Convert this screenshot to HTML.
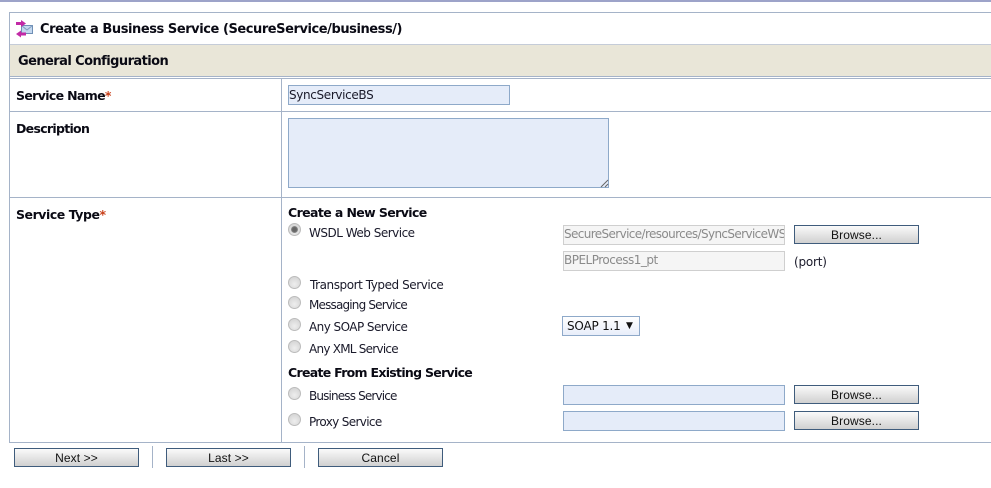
<!DOCTYPE html>
<html><head><meta charset="utf-8"><style>
html,body{margin:0;padding:0;background:#fff}
body{position:relative;width:991px;height:488px;overflow:hidden;font-family:"DejaVu Sans","Liberation Sans",sans-serif;font-size:12px;color:#1a1a2a}
.a,.t,.b,.r,.i{position:absolute;box-sizing:border-box}
.t{white-space:nowrap;line-height:16px;letter-spacing:-.45px}
.h{font-weight:bold;color:#0a0a14;letter-spacing:-.65px;font-size:12.5px}
.l{background:#a5b3c8}
.b{width:125px;height:19px;border:1px solid #3f5c7c;background:linear-gradient(#fafafa,#d0d0d0);text-align:center;line-height:18px;color:#111;font-family:"Liberation Sans",sans-serif;font-size:12px;letter-spacing:.1px}
.r{width:13px;height:13px;border-radius:50%;border:1px solid #bcbcbc;background:radial-gradient(circle at 50% 65%,#eee,#cfcfcf)}
.i{background:#e5ecf9;border:1px solid #8ea9c9}
.d{background:#f5f5f5;border:1px solid #cfcfcf;color:#8a8a8a;font-size:12px;line-height:17px;padding-left:0;letter-spacing:-.5px;overflow:hidden;white-space:nowrap}
</style></head><body>
<div class="a" style="left:0;top:0;width:991px;height:2px;background:#9da3c9"></div>
<div class="a l" style="left:9px;top:12px;width:982px;height:1px"></div>
<div class="a l" style="left:9px;top:44px;width:982px;height:1px;background:#c5ccd8"></div>
<div class="a" style="left:10px;top:45px;width:981px;height:31px;background:#e9e6d8"></div>
<div class="a l" style="left:9px;top:76px;width:982px;height:1px"></div>
<div class="a l" style="left:9px;top:78px;width:982px;height:1px"></div>
<div class="a l" style="left:9px;top:111px;width:982px;height:1px"></div>
<div class="a l" style="left:9px;top:197px;width:982px;height:1px"></div>
<div class="a l" style="left:9px;top:442px;width:982px;height:1px"></div>
<div class="a l" style="left:9px;top:12px;width:1px;height:431px"></div>
<div class="a l" style="left:281px;top:78px;width:1px;height:365px"></div>

<svg class="a" style="left:16px;top:20px" width="18" height="18" viewBox="0 0 18 18">
<rect x="5.500" y="5.500" width="11" height="8" fill="#c4d8ef" stroke="#6f8fb5"/>
<path d="M5.500 5.500l5.500 4.500 5.500-4.500" fill="none" stroke="#7f9dc0"/>
<path d="M0 2h5V0l5 3.500-5 3.500V5H0z" fill="#c22aa6"/>
<path d="M10 12.500H5V10.500L0 14l5 3.500v-2h5z" fill="#c22aa6"/>
</svg>
<div class="t h" style="left:40px;top:22px;font-size:13px;letter-spacing:-.44px">Create a Business Service (SecureService/business/)</div>
<div class="t h" style="left:18px;top:54px;font-size:13px;letter-spacing:-.57px">General Configuration</div>
<div class="t h" style="left:16px;top:88px">Service Name<span style="color:#c8401a">*</span></div>
<div class="t h" style="left:16px;top:121px;letter-spacing:-.7px">Description</div>
<div class="t h" style="left:16px;top:207px;letter-spacing:-.45px">Service Type<span style="color:#c8401a">*</span></div>

<div class="a i" style="left:288px;top:85px;width:222px;height:20px;font-size:12px;line-height:18px;padding-left:0;letter-spacing:-.35px">SyncServiceBS</div>
<div class="a i" style="left:288px;top:118px;width:321px;height:70px"></div>
<svg class="a" style="left:600px;top:179px" width="9" height="9"><path d="M1 8L8 1M5 8L8 5" stroke="#666" fill="none"/></svg>

<div class="t h" style="left:288px;top:205px;letter-spacing:-.6px">Create a New Service</div>
<div class="r" style="left:288px;top:223px"></div>
<div class="a" style="left:291px;top:226px;width:7px;height:7px;border-radius:50%;background:radial-gradient(circle,#666 40%,#b0b0b0 90%)"></div>
<div class="t" style="left:309px;top:225px;letter-spacing:-.5px">WSDL Web Service</div>
<div class="r" style="left:288px;top:276px"></div>
<div class="t" style="left:310px;top:277px;letter-spacing:-.44px">Transport Typed Service</div>
<div class="r" style="left:288px;top:296px"></div>
<div class="t" style="left:309px;top:297px;letter-spacing:-.82px">Messaging Service</div>
<div class="r" style="left:288px;top:318px"></div>
<div class="t" style="left:309px;top:319px;letter-spacing:-.55px">Any SOAP Service</div>
<div class="r" style="left:288px;top:340px"></div>
<div class="t" style="left:309px;top:341px;letter-spacing:-.75px">Any XML Service</div>
<div class="t h" style="left:288px;top:365px;letter-spacing:-.7px">Create From Existing Service</div>
<div class="r" style="left:288px;top:387px"></div>
<div class="t" style="left:309px;top:388px;letter-spacing:-.85px">Business Service</div>
<div class="r" style="left:288px;top:413px"></div>
<div class="t" style="left:309px;top:414px;letter-spacing:-.65px">Proxy Service</div>

<div class="a d" style="left:563px;top:225px;width:222px;height:20px;letter-spacing:-.62px">SecureService/resources/SyncServiceWSDL</div>
<div class="a d" style="left:563px;top:251px;width:222px;height:20px">BPELProcess1_pt</div>
<div class="t" style="left:794px;top:254px;letter-spacing:-.2px">(port)</div>
<div class="b" style="left:794px;top:225px">Browse...</div>
<div class="a i" style="left:562px;top:316px;width:78px;height:20px;background:linear-gradient(#fff,#e8eefa);line-height:18px;padding-left:4px;letter-spacing:-.2px;color:#111">SOAP 1.1<span style="position:absolute;left:63px;top:0;font-size:9px">▼</span></div>
<div class="a i" style="left:563px;top:385px;width:222px;height:20px"></div>
<div class="b" style="left:794px;top:385px">Browse...</div>
<div class="a i" style="left:563px;top:411px;width:222px;height:20px"></div>
<div class="b" style="left:794px;top:411px">Browse...</div>

<div class="b" style="left:14px;top:448px">Next &gt;&gt;</div>
<div class="a l" style="left:152px;top:446px;width:1px;height:22px"></div>
<div class="b" style="left:166px;top:448px">Last &gt;&gt;</div>
<div class="a l" style="left:304px;top:446px;width:1px;height:22px"></div>
<div class="b" style="left:318px;top:448px">Cancel</div>
</body></html>
